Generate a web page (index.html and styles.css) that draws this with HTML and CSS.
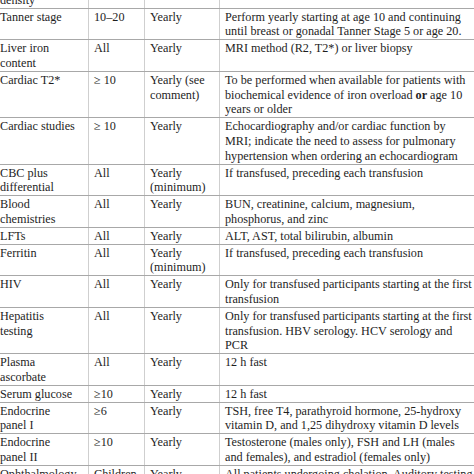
FILE: index.html
```html
<!DOCTYPE html>
<html>
<head>
<meta charset="utf-8">
<link rel="stylesheet" href="styles.css">
</head>
<body>
<div class="wrap">
<table class="grid">
<colgroup><col class="c1"><col class="c2"><col class="c3"><col class="c4"></colgroup>
<tbody>
<tr><td>Bone mineral density</td><td>≥ 10</td><td>Yearly</td><td>DXA scan</td></tr>
<tr><td>Tanner stage</td><td>10–20</td><td>Yearly</td><td>Perform yearly starting at age 10 and continuing until breast or gonadal Tanner Stage 5 or age 20.</td></tr>
<tr><td>Liver iron content</td><td>All</td><td>Yearly</td><td>MRI method (R2, T2*) or liver biopsy</td></tr>
<tr><td>Cardiac T2*</td><td>≥ 10</td><td>Yearly (see comment)</td><td>To be performed when available for patients with biochemical evidence of iron overload <b>or</b> age 10 years or older</td></tr>
<tr><td>Cardiac studies</td><td>≥ 10</td><td>Yearly</td><td>Echocardiography and/or cardiac function by MRI; indicate the need to assess for pulmonary hypertension when ordering an echocardiogram</td></tr>
<tr><td>CBC plus differential</td><td>All</td><td>Yearly (minimum)</td><td>If transfused, preceding each transfusion</td></tr>
<tr><td>Blood chemistries</td><td>All</td><td>Yearly</td><td>BUN, creatinine, calcium, magnesium, phosphorus, and zinc</td></tr>
<tr><td>LFTs</td><td>All</td><td>Yearly</td><td>ALT, AST, total bilirubin, albumin</td></tr>
<tr><td>Ferritin</td><td>All</td><td>Yearly (minimum)</td><td>If transfused, preceding each transfusion</td></tr>
<tr><td>HIV</td><td>All</td><td>Yearly</td><td>Only for transfused participants starting at the first transfusion</td></tr>
<tr><td>Hepatitis testing</td><td>All</td><td>Yearly</td><td>Only for transfused participants starting at the first transfusion. HBV serology. HCV serology and PCR</td></tr>
<tr><td>Plasma ascorbate</td><td>All</td><td>Yearly</td><td>12 h fast</td></tr>
<tr><td>Serum glucose</td><td>≥10</td><td>Yearly</td><td>12 h fast</td></tr>
<tr><td>Endocrine panel I</td><td>≥6</td><td>Yearly</td><td>TSH, free T4, parathyroid hormone, 25-hydroxy vitamin D, and 1,25 dihydroxy vitamin D levels</td></tr>
<tr><td>Endocrine panel II</td><td>≥10</td><td>Yearly</td><td>Testosterone (males only), FSH and LH (males and females), and estradiol (females only)</td></tr>
<tr><td>Ophthalmology</td><td>Children</td><td>Yearly</td><td>All patients undergoing chelation. Auditory testing should also be performed</td></tr>
</tbody>
</table>
</div>
</body>
</html>
```
FILE: styles.css
```css
html, body {
  margin: 0;
  padding: 0;
  background: #fff;
  overflow: hidden;
}
.wrap {
  width: 474px;
  height: 474px;
  overflow: hidden;
}
.grid {
  margin-top: -24px;
  margin-left: -6px;
  border-collapse: collapse;
  table-layout: fixed;
  width: 486px;
  font-family: "Liberation Serif", "Times New Roman", serif;
  font-size: 12.2px;
  line-height: 14.8px;
  color: #1e1e1e;
}
.c1 { width: 94px; }
.c2 { width: 56px; }
.c3 { width: 75px; }
.c4 { width: 261px; }
.grid td {
  vertical-align: top;
  padding: 1px 5px 0 5px;
  border-top: 1px solid #a8a8a8;
  border-bottom: 1px solid #a8a8a8;
  border-left: 1px solid #cfcfcf;
  border-right: 1px solid #cfcfcf;
}
.grid td:first-child {
  padding-right: 12px;
}
.grid b { font-weight: bold; }
```
